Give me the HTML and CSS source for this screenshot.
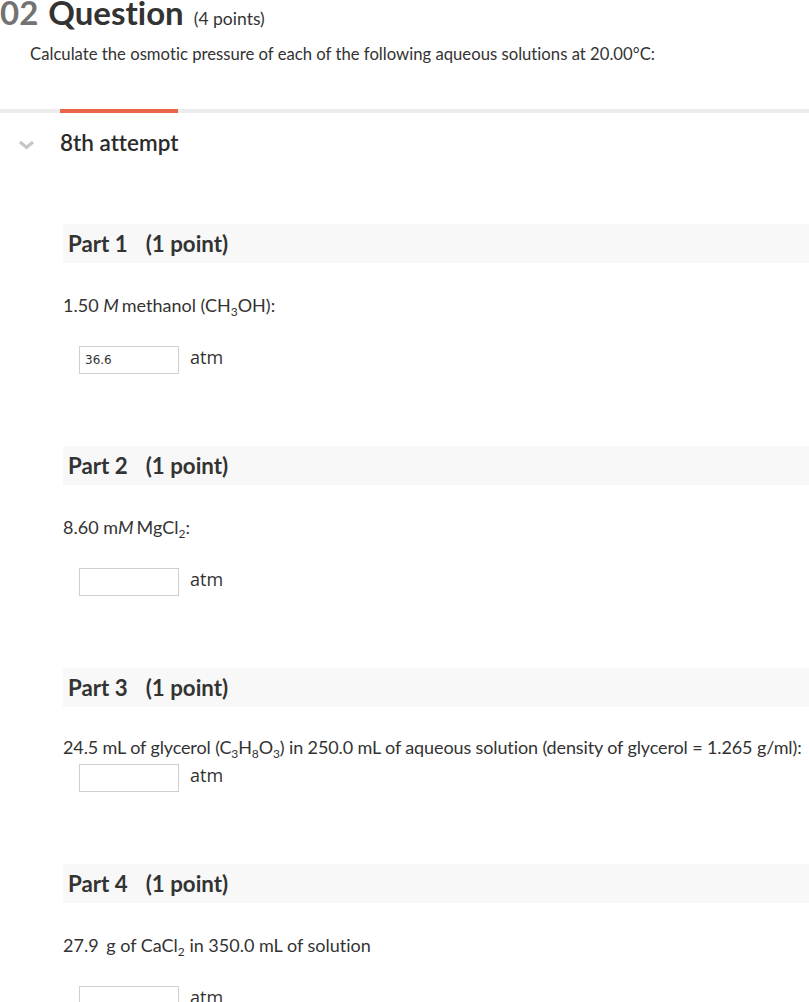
FILE: index.html
```html
<!DOCTYPE html>
<html lang="en">
<head>
  <meta charset="UTF-8">
  <meta name="viewport" content="width=device-width, initial-scale=1.0">
  <title>02 Question</title>
  <link rel="stylesheet" href="styles.css">
</head>
<body>

  <div class="question-head">
    <h1><span class="qnum">02</span> Question <span class="points">(4 points)</span></h1>
    <p class="prompt">Calculate the osmotic pressure of each of the following aqueous solutions at 20.00&deg;C:</p>
  </div>

  <div class="tabs">
    <div class="tab-active"></div>
  </div>

  <div class="attempt">
    <svg class="chevron" width="17" height="10" viewBox="0 0 17 10">
      <polyline points="2,2 8.5,7.5 15,2" fill="none" stroke="#c6c6c6" stroke-width="3.2"/>
    </svg>
    <span class="attempt-title">8th attempt</span>
  </div>

  <div class="parts">

    <div class="part">
      <div class="part-head"><span>Part 1</span><span class="part-points">(1 point)</span></div>
      <p class="part-text">1.50 <i>M</i>methanol (CH<sub>3</sub>OH):</p>
      <div class="answer">
        <input type="text" value="36.6">
        <span class="unit">atm</span>
      </div>
    </div>

    <div class="part">
      <div class="part-head"><span>Part 2</span><span class="part-points">(1 point)</span></div>
      <p class="part-text">8.60 m<i>M</i>MgCl<sub>2</sub>:</p>
      <div class="answer">
        <input type="text">
        <span class="unit">atm</span>
      </div>
    </div>

    <div class="part">
      <div class="part-head"><span>Part 3</span><span class="part-points">(1 point)</span></div>
      <p class="part-text tight">24.5 mL of glycerol (C<sub>3</sub>H<sub>8</sub>O<sub>3</sub>) in 250.0 mL of aqueous solution (density of glycerol = 1.265 g/ml):</p>
      <div class="answer close">
        <input type="text">
        <span class="unit">atm</span>
      </div>
    </div>

    <div class="part">
      <div class="part-head"><span>Part 4</span><span class="part-points">(1 point)</span></div>
      <p class="part-text">27.9 <span class="gap">g</span> of CaCl<sub>2</sub> in 350.0 mL of solution</p>
      <div class="answer">
        <input type="text">
        <span class="unit">atm</span>
      </div>
    </div>

  </div>

</body>
</html>
```

FILE: styles.css
```css
body {
  margin: 0;
  font-family: Lato, "Open Sans", Arial, sans-serif;
  font-variant-ligatures: none;
  color: #333;
  background-color: #fff;
  overflow: hidden;
}
h1 {
  margin: -4px 0 0 0;
  font-size: 33px;
  line-height: 33px;
  font-weight: bold;
  color: #333;
  white-space: nowrap;
}
.qnum {
  color: #727272;
  margin-right: 2px;
}
.points {
  font-size: 17.5px;
  line-height: 17px;
  font-weight: normal;
  margin-left: 2px;
}
.prompt {
  margin: 15px 0 0 30px;
  font-size: 16.7px;
  line-height: 20px;
}
.tabs {
  margin-top: 45px;
  height: 4px;
  background-color: #ededed;
}
.tab-active {
  margin-left: 60px;
  width: 118px;
  height: 4px;
  background-color: #e8654a;
}
.attempt {
  display: flex;
  align-items: center;
  margin-top: 17px;
  height: 26px;
}
.chevron {
  margin-left: 18px;
  margin-top: 4px;
}
.attempt-title {
  margin-left: 25px;
  font-size: 22.5px;
  line-height: 26px;
  font-weight: 600;
  color: #2b2b2b;
}
.parts {
  margin-top: 68px;
  margin-left: 63px;
}
.part {
  margin-bottom: 72px;
}
.part-head {
  background-color: #f8f8f8;
  height: 39px;
  line-height: 39px;
  padding-left: 5px;
  font-size: 22.3px;
  font-weight: bold;
  color: #333;
}
.part-points {
  margin-left: 18px;
}
.part-text {
  margin: 31px 0 0 0;
  font-size: 18px;
  line-height: 22px;
  white-space: nowrap;
}
.part-text i {
  margin-right: 3px;
}
.part-text sub {
  font-size: 12px;
  line-height: 0;
  vertical-align: -4px;
}
.tight {
  margin-top: 29px;
  letter-spacing: -0.12px;
}
.gap {
  margin-left: 3px;
}
.answer {
  display: flex;
  align-items: center;
  height: 28px;
  margin: 30px 0 0 16px;
}
.answer.close {
  margin-top: 6px;
}
input {
  box-sizing: border-box;
  width: 100px;
  height: 28px;
  margin: 0;
  padding: 0 5px;
  border: 1px solid #cfcfcf;
  font-family: "DejaVu Sans", Verdana, sans-serif;
  font-size: 12px;
  color: #333;
}
.unit {
  margin-left: 11px;
  margin-bottom: 6px;
  font-family: "Open Sans", Arial, sans-serif;
  font-size: 18px;
  line-height: 20px;
  color: #333;
}
```
